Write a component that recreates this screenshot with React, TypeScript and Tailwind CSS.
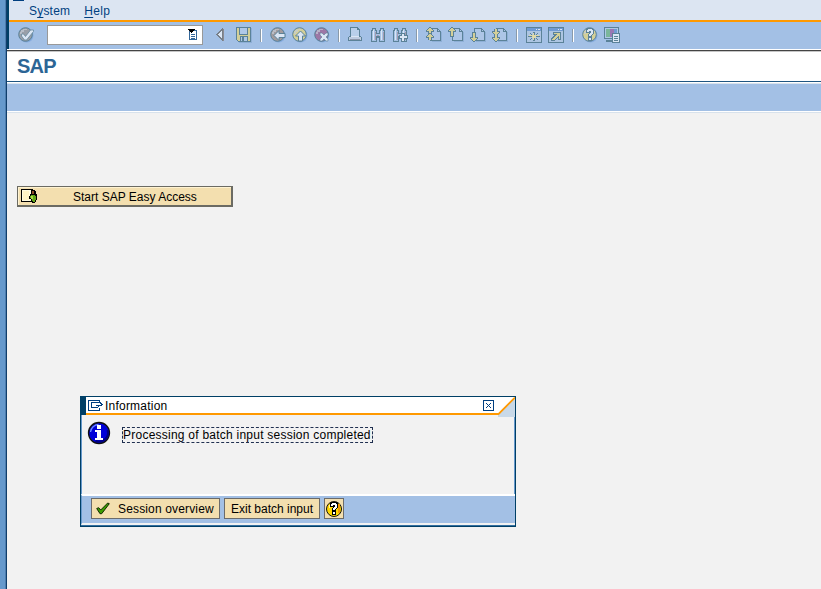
import type { ReactNode } from "react";

const LINE = "#5b8298";
const PALE = "#dbe6f4";
const SAND = "#d3cf98";

function Icon({ children, className = "" }: { children: ReactNode; className?: string }) {
  return (
    <svg
      width="16"
      height="16"
      viewBox="0 0 16 16"
      fill="none"
      shapeRendering="crispEdges"
      className={`shrink-0 overflow-visible ${className}`}
      aria-hidden
    >
      {children}
    </svg>
  );
}

function Separator() {
  return (
    <span className="flex w-[18px] shrink-0 pl-2">
      <span className="h-[13px] w-px bg-[#8a9aaa]" />
      <span className="h-[13px] w-px bg-white" />
    </span>
  );
}

function Disc({ fill, children }: { fill: string; children?: ReactNode }) {
  return (
    <Icon>
      <circle cx="8.500" cy="8.500" r="7" fill="#86acdf" shapeRendering="auto" />
      <circle cx="7.500" cy="7.500" r="6.800" fill={fill} stroke={LINE} shapeRendering="auto" />
      <path d="M5 2h4v1H5zM3 3h3v2H4v2H2V5h1z" fill="#c3ccd6" opacity=".7" />
      {children}
    </Icon>
  );
}

function Page({ children }: { children: ReactNode }) {
  return (
    <Icon>
      <path d="M5 2h7l3 3v9H5z" fill="#adc6e7" />
      <path d="M5 1h7v1H5zM11 2h1v3h-1zM12 2h1v1h-1zM13 3h1v1h-1zM14 4h1v10h-1zM12 4h2v1h-2zM4 13h10v1H4zM4 1h1v12H4z" fill={LINE} />
      <path d="M15 5h1v10H6v-1h9z" fill="#8eafd6" />
      {children}
    </Icon>
  );
}

function ArrowHead({ y, down = false }: { y: number; down?: boolean }) {
  return (
    <g transform={`translate(0 ${y})${down ? " scale(1 -1)" : ""}`}>
      <path d="M3 0h2v1h1v1h1v1h1v2H6v2H2V5H0V3h1V2h1V1h1z" fill={LINE} />
      <path d="M3 1h2v1h1v1h1v1H5v3H3V4H1V3h1V2h1z" fill={SAND} />
    </g>
  );
}

function Binoculars() {
  return (
    <>
      <path d="M1 3h1V1h4v2h1v3h2V3h1V1h4v2h1v12H9v-4H7v4H1z" fill={LINE} />
      <path d="M3 2h2v2h1v3h4V4h1V2h2v2h1v10h-4V9H6v5H2V4h1z" fill="#a6c2e4" />
      <path d="M3 3h1v10H3zM11 3h1v10h-1z" fill={PALE} />
      <path d="M5 5h1v8H5zM13 5h1v8h-1zM7 8h2v1H7z" fill="#a49cb0" />
    </>
  );
}

function Window({ children }: { children: ReactNode }) {
  return (
    <Icon>
      <path d="M0 0h16v16H0z" fill={LINE} />
      <path d="M1 4h14v11H1z" fill="#adc5e2" />
      <path d="M1 1h14v3H1z" fill="#719bd2" />
      <path d="M10 2h1v1h-1zM12 2h2v1h-2z" fill={PALE} />
      {children}
    </Icon>
  );
}

function HelpMark({ bright = false }: { bright?: boolean }) {
  const edge = bright ? "#000" : LINE;
  return (
    <>
      <path d="M4 2h1V1h6v1h1v5h-1v1h-1v2H6V7h1V6H4z" fill={edge} />
      <path d="M6 10h4v4H6z" fill={edge} />
      <path d="M5 3h1V2h4v1h1v4h-1v1H9v1H7V7h1V6h1V4H7v1H5zM7 11h2v2H7z" fill={bright ? "#fff" : PALE} />
    </>
  );
}

function MenuBar() {
  return (
    <nav className="relative flex h-5 gap-[14px] bg-[#dce5f2] pt-[3px] pl-5 text-[12px] leading-4 tracking-[0.2px] text-[#003f80]">
      <span className="absolute top-0 left-1 h-px w-[11px] bg-[#003f80]" />
      <span>
        S<span className="underline underline-offset-2">y</span>stem
      </span>
      <span className="tracking-[0.3px]">
        <span className="underline underline-offset-2">H</span>elp
      </span>
    </nav>
  );
}

function Toolbar() {
  return (
    <div className="flex h-[27px] items-center bg-[#a3c0e5] pb-px pl-[9px]">
      <Disc fill="#999fa8">
        <path d="M3.500 7h2l2 2.500 5-6.500h3v1.500l-7 8.500h-2l-3-4z" fill={PALE} stroke={LINE} strokeWidth=".7" shapeRendering="auto" />
      </Disc>
      <div className="ml-[13px] flex h-5 w-[156px] items-center justify-end border border-[#999] bg-white pr-1">
        <svg width="11" height="12" viewBox="0 0 11 12" shapeRendering="crispEdges" aria-hidden>
          <path d="M2 1h8v10H2z" fill="#336699" />
          <path d="M3 2h6v8H3z" fill="#fff" />
          <path d="M4 5h4v1H4zM4 7h4v1H4zM4 9h4v1H4z" fill="#336699" />
          <path d="M1 0h7v1H7v1H6v1H5v1H4V3H3V2H2V1H1z" fill="#000" />
        </svg>
      </div>
      <div className="ml-[11px] flex items-center gap-1.5">
        <Icon>
          <path d="M9 1v13L2 8V7z" fill="#777f88" />
          <path d="M8 3v9L4 8V7z" fill={PALE} />
          <path d="M9 2h1v12H9z" fill="#8b8b92" />
        </Icon>
        <Icon>
          <path d="M0 0h15v15H2v-1H1v-1H0z" fill={LINE} />
          <path d="M1 1h13v13H2v-1H1z" fill={SAND} />
          <path d="M3 1h9v7H3zM4 9h8v5H4z" fill={LINE} />
          <path d="M4 1h7v6H4zM8 10h3v4H8z" fill="#afc8e8" />
          <path d="M5 10h1v4H5z" fill="#afc8e8" />
          <path d="M15 1h1v15H3v-1h12z" fill="#8eafd6" />
        </Icon>
      </div>
      <Separator />
      <div className="flex gap-1.5">
        <Disc fill="#a19b9d">
          <path d="M4 8.500l5-5v3h6v4H9v3z" fill={PALE} stroke={LINE} shapeRendering="auto" />
        </Disc>
        <Disc fill={SAND}>
          <path d="M8.500 4l5 5h-3v5h-4V9h-3z" fill={PALE} stroke={LINE} shapeRendering="auto" />
        </Disc>
        <Disc fill="#9d77a6">
          <path d="M6 6h2l2 2 2-2h2v2l-2 2 2 2v2h-2l-2-2-2 2H6v-2l2-2-2-2z" fill={PALE} stroke={LINE} strokeWidth=".6" shapeRendering="auto" />
        </Disc>
      </div>
      <Separator />
      <div className="flex gap-1.5">
        <Icon>
          <path d="M2 0h8v1h1v1h1v8H2z" fill={LINE} />
          <path d="M3 1h6v2h2v6H3z" fill="#b9cfea" />
          <path d="M1 9h12v1h1v4H0v-4h1z" fill={LINE} />
          <path d="M1 10h12v3H1z" fill="#bdcbe0" />
          <path d="M2 12h10v1H2z" fill="#8e97a9" />
          <path d="M3 9h8v1H3z" fill={PALE} />
        </Icon>
        <Icon>
          <Binoculars />
        </Icon>
        <Icon>
          <Binoculars />
          <path d="M9 6h4v2h3v4h-3v3H9v-3H7V8h2z" fill={LINE} />
          <path d="M10 7h2v2h3v2h-3v3h-2v-3H8V9h2z" fill={PALE} />
        </Icon>
      </div>
      <Separator />
      <div className="flex gap-1.5">
        <Page>
          <ArrowHead y={0} />
          <ArrowHead y={6} />
        </Page>
        <Page>
          <ArrowHead y={0} />
          <path d="M2 6h4v4H2z" fill={LINE} />
          <path d="M3 5h2v4H3z" fill={SAND} />
        </Page>
        <Page>
          <path d="M0 6h4v8H0z" fill="#a3c0e5" />
          <ArrowHead y={15} down />
          <path d="M2 5h4v4H2z" fill={LINE} />
          <path d="M3 6h2v4H3z" fill={SAND} />
        </Page>
        <Page>
          <ArrowHead y={9} down />
          <ArrowHead y={15} down />
        </Page>
      </div>
      <Separator />
      <div className="flex gap-1.5">
        <Window>
          <path d="M7 5h2v3H7zM7 11h2v3H7zM2 9h4v1H2zM10 9h4v1h-4zM4 6h1v1H4zM5 7h1v1H5zM11 6h1v1h-1zM10 7h1v1h-1zM5 11h1v1H5zM4 12h1v1H4zM10 11h1v1h-1zM11 12h1v1h-1z" fill={LINE} />
          <path d="M7 6h1v2H7zM7 11h1v2H7zM6 8h4v3H6zM3 8h3v1H3zM10 8h3v1h-3z" fill="#ddd9a8" />
        </Window>
        <Window>
          <path d="M5 5h8v8h-3v-2H9v1H8v1H7v1H3v-3h1v-1h1V9h1V8H5z" fill={LINE} />
          <path d="M6 6h6v6h-1V9h-1v1H9v1H8v1H7v1H4v-1h1v-1h1v-1h1V9h1V8h1V7H6z" fill={SAND} />
        </Window>
      </div>
      <Separator />
      <div className="flex gap-1.5">
        <Disc fill={SAND}>
          <HelpMark />
        </Disc>
        <Icon>
          <path d="M0 0h15v12H0z" fill={LINE} />
          <path d="M1 1h13v10H1z" fill="#afc8e5" />
          <path d="M2 2h4v8H2z" fill="#7bb69b" />
          <path d="M6 2h4v8H6z" fill="#9a78b4" />
          <path d="M10 2h3v8h-3z" fill="#719bd2" />
          <path d="M2 13h7v2H2z" fill={LINE} />
          <path d="M8 6h8v10H8z" fill={LINE} />
          <path d="M9 7h6v8H9z" fill={PALE} />
          <path d="M10 9h4v1h-4zM10 11h4v1h-4zM10 13h4v1h-4z" fill={LINE} />
        </Icon>
      </div>
    </div>
  );
}

function InformationDialog() {
  return (
    <section className="absolute top-[396px] left-20 flex h-[131px] w-[436px] flex-col border border-[#003f66] bg-[#f2f2f2]">
      <header className="relative flex h-[18px] shrink-0 items-start border-b-2 border-[#ff9900] bg-white pl-[7px]">
        <span className="absolute top-0 left-0 h-[18px] w-[5px] bg-[#003f66]" />
        <svg width="16" height="12" viewBox="0 0 16 12" shapeRendering="crispEdges" className="mt-[3px]" aria-hidden>
          <path d="M0 0h12v2h-1V1H1v9h10V8h1v3H0z" fill="#003f80" />
          <path d="M3 2h10v1h1v1h1v1h-1v1h-3v1h-1v1H3z" fill="#003f80" />
          <path d="M4 3h8v1h1v1H8v1h2v1H4z" fill="#fff" />
        </svg>
        <h2 className="mt-px ml-px text-[12px] leading-4 tracking-[0.22px]">Information</h2>
        <svg width="11" height="11" viewBox="0 0 11 11" shapeRendering="crispEdges" className="mt-[3px] mr-[21px] ml-auto" aria-hidden>
          <path d="M0 0h11v11H0z" fill="#003f80" />
          <path d="M1 1h9v9H1z" fill="#fff" />
          <path d="M3 3h1v1H3zM4 4h1v1H4zM5 5h1v1H5zM6 6h1v1H6zM7 7h1v1H7zM7 3h1v1H7zM6 4h1v1H6zM4 6h1v1H4zM3 7h1v1H3z" fill="#003f80" />
        </svg>
        <svg width="17" height="20" viewBox="0 0 17 20" className="absolute top-0 right-0" aria-hidden>
          <path d="M17 0v20H0v-2z" fill="#c9d9e8" />
          <path d="M0 17.500L17 .5" stroke="#ff9900" strokeWidth="1.800" />
        </svg>
      </header>
      <div className="flex grow items-start border-r border-l border-r-[#6699cc] border-l-[#6699cc] pt-[6px] pl-[5px]">
        <svg width="24" height="24" viewBox="0 0 24 24" className="shrink-0" aria-hidden>
          <circle cx="12" cy="12" r="10.500" fill="#0000d8" stroke="#111" strokeWidth="1.300" />
          <path d="M3.500 11a8.500 8.500 0 0 1 8-7.500" fill="none" stroke="#6d8cff" strokeWidth="1.300" />
          <path d="M20.500 9a9 9 0 0 1-12 11" fill="none" stroke="#000080" strokeWidth="2" />
          <path d="M10 4h4v4h-4zM8 9h6v8h2v2H8v-2h2v-6H8z" fill="#fff" shapeRendering="crispEdges" />
        </svg>
        <p className="mt-[6px] ml-[11px] h-4 w-[251px] border border-dashed border-[#203050] text-[12px] leading-[15px] tracking-[0.24px] whitespace-nowrap">
          Processing of batch input session completed
        </p>
      </div>
      <footer className="flex h-[31px] shrink-0 items-start gap-1 border-t-2 border-b-2 border-l border-t-white border-b-[#f2f2f2] border-l-[#6699cc] bg-[#a3c0e5] pt-[2px] pl-[9px] text-[12px] leading-[19px]">
        <button className="flex h-[21px] w-[129px] items-center border border-[#6b6b6b] bg-[#f3dfaf] pl-1 whitespace-nowrap">
          <svg width="14" height="13" viewBox="0 0 14 13" className="mr-2 shrink-0" aria-hidden>
            <path d="M.7 6.500l2-.8 2 2.300 7-7 1.600.7-7.600 10H4z" fill="#3c9d00" stroke="#102800" />
          </svg>
          <span className="pt-px tracking-[0.15px]">Session overview</span>
        </button>
        <button className="h-[21px] w-24 border border-[#6b6b6b] bg-[#f3dfaf] pt-px whitespace-nowrap">
          Exit batch input
        </button>
        <button className="flex h-[21px] w-5 items-center justify-center border border-[#6b6b6b] bg-[#f3dfaf]">
          <Icon>
            <circle cx="8" cy="8" r="7.500" fill="#ffd800" stroke="#111" shapeRendering="auto" />
            <path d="M12 3h2v9h-2z" fill="#f39a00" />
            <path d="M3 4h1v3H3zM4 3h1v1H4z" fill="#fff7a0" />
            <HelpMark bright />
          </Icon>
        </button>
      </footer>
      <span className="h-px shrink-0 bg-[#336f9f]" />
    </section>
  );
}

export default function App() {
  return (
    <div className="relative flex h-[589px] w-[821px] overflow-hidden bg-[#f2f2f2] font-['Liberation_Sans',Arial,sans-serif] text-black">
      <div className="w-[6px] shrink-0 border-r border-[#4d7dae] bg-[#6699cc]" />
      <main className="flex min-w-0 grow flex-col border-l border-[#103e6b]">
        <div className="border-l-2 border-[#003f66]">
          <MenuBar />
          <div className="h-[2px] bg-[#ff9900]" />
          <Toolbar />
        </div>
        <div className="h-[33px] border-t border-b border-t-white border-b-[#1f5580] bg-white">
          <div className="h-px bg-[#444]" />
          <div className="h-px bg-[#c6c6c6]" />
          <h1 className="mt-px pl-[10px] text-[20px] leading-[26px] font-bold tracking-[-0.8px] text-[#2c6595]">SAP</h1>
        </div>
        <div className="h-[31px] border-t border-b border-t-white border-b-[#d8e2ec] bg-white">
          <div className="h-7 border-t border-[#d8e2ec] bg-[#a3c0e5]" />
        </div>
        <button className="mt-[73px] ml-[10px] flex h-[21px] w-[216px] items-center border border-r-2 border-b-2 border-[#6b6b63] bg-[#f3dfaf] pl-[3px] text-[12px] leading-[18px] shadow-[inset_1px_1px_0_#fff3d2]">
          <svg width="17" height="16" viewBox="0 0 17 16" shapeRendering="crispEdges" className="shrink-0" aria-hidden>
            <path d="M0 1h12v13H0z" fill="#000" />
            <path d="M1 2h10v11H1z" fill="#fffbe0" />
            <path d="M2 3h6v9H2z" fill="#fff3c5" />
            <path d="M10 2h4v1h1v3h1v6h-1v2h-1v1h-3v-1h-1v-3H8V8h1V6h1z" fill="#000" />
            <path d="M11 3h2v3h-2z" fill="#8b4a26" />
            <path d="M10 7h4v1h1v4h-1v2h-2v-1h-1v-3H9V8h1z" fill="#60a818" />
            <path d="M10 8h2v3h-2z" fill="#a8dd45" />
          </svg>
          <span className="mt-px ml-[35px]">Start SAP Easy Access</span>
        </button>
      </main>
      <InformationDialog />
    </div>
  );
}
